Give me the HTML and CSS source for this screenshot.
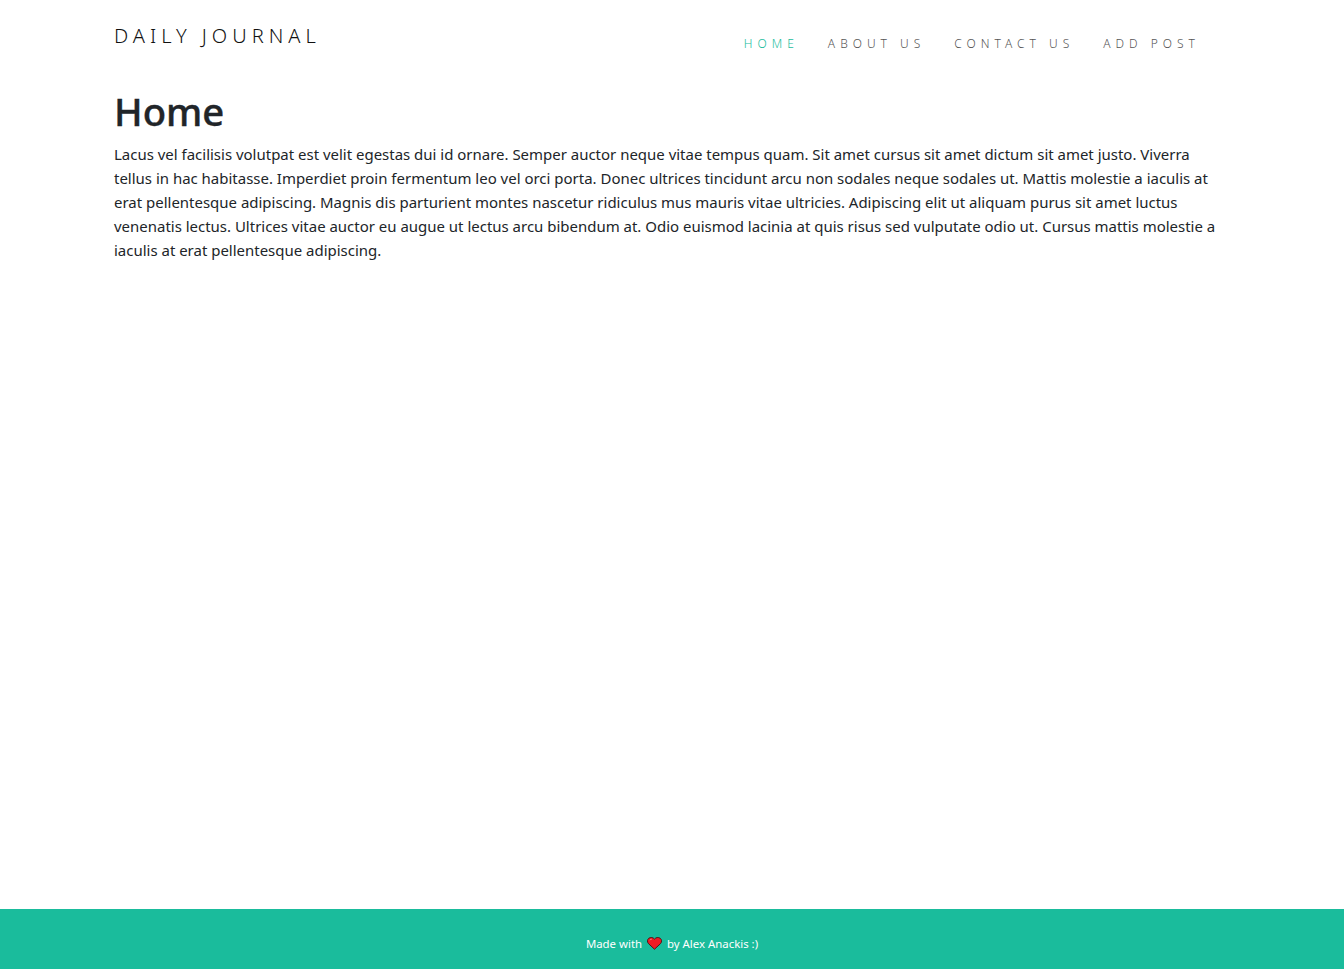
FILE: index.html
```html
<!DOCTYPE html>
<html lang="en">
<head>
  <meta charset="UTF-8" />
  <title>Daily Journal</title>
  <link rel="stylesheet" href="styles.css">
</head>
<body>
  <header class="navbar">
    <a class="brand" href="#">DAILY JOURNAL</a>
    <ul class="nav-links">
      <li><a class="active" href="#">HOME</a></li>
      <li><a href="#">ABOUT US</a></li>
      <li><a href="#">CONTACT US</a></li>
      <li><a href="#">ADD POST</a></li>
    </ul>
  </header>

  <main class="content">
    <h1>Home</h1>
    <p>Lacus vel facilisis volutpat est velit egestas dui id ornare. Semper auctor neque vitae tempus quam. Sit amet cursus sit amet dictum sit amet justo. Viverra tellus in hac habitasse. Imperdiet proin fermentum leo vel orci porta. Donec ultrices tincidunt arcu non sodales neque sodales ut. Mattis molestie a iaculis at erat pellentesque adipiscing. Magnis dis parturient montes nascetur ridiculus mus mauris vitae ultricies. Adipiscing elit ut aliquam purus sit amet luctus venenatis lectus. Ultrices vitae auctor eu augue ut lectus arcu bibendum at. Odio euismod lacinia at quis risus sed vulputate odio ut. Cursus mattis molestie a iaculis at erat pellentesque adipiscing.</p>
  </main>

  <footer class="footer">
    <span>Made with</span>
    <svg class="heart" viewBox="0 0 16 14" width="15" height="13" aria-hidden="true">
      <path d="M8 13.2 1.6 7.2C-.2 5.4.1 2.7 1.9 1.3 3.8 0 6.500.3 8 2.300 9.500.3 12.200 0 14.100 1.300c1.800 1.400 2.100 4.100.3 5.900z" fill="#ed1c24" stroke="#4a1015" stroke-width="1"/>
      <path d="M3 3.500c.5-.8 1.200-1.100 2-1.100" fill="none" stroke="#ff8a8a" stroke-width="1"/>
    </svg>
    <span>by Alex Anackis :)</span>
  </footer>
</body>
</html>
```

FILE: styles.css
```css
html,
body {
  height: 100%;
}

body {
  margin: 0;
  display: flex;
  flex-direction: column;
  font-family: "Noto Sans", "Open Sans", sans-serif;
  font-size: 14.97px;
  line-height: 24px;
  color: #212529;
  background-color: #fff;
}

a {
  text-decoration: none;
}

.navbar {
  width: 1116px;
  margin: 0 auto;
  display: flex;
  justify-content: space-between;
  align-items: flex-start;
}

.brand {
  margin-top: 22px;
  font-size: 20px;
  font-weight: 300;
  line-height: 28px;
  letter-spacing: 5px;
  color: #111;
}

.nav-links {
  list-style: none;
  margin: 30px 30px 0 0;
  padding: 0;
  display: flex;
  gap: 29px;
}

.nav-links a {
  font-size: 12px;
  font-weight: 300;
  line-height: 20px;
  letter-spacing: 5px;
  color: #555;
}

.nav-links a.active {
  color: #1abc9c;
}

.content {
  flex: 1;
  width: 1116px;
  margin: 0 auto;
}

h1 {
  margin: 34px 0 8px;
  font-size: 38.3px;
  font-weight: 500;
  line-height: 46px;
  -webkit-text-stroke: 0.4px #212529;
}

p {
  margin: 0;
}

.footer {
  height: 60px;
  padding-top: 9px;
  box-sizing: border-box;
  display: flex;
  justify-content: center;
  align-items: center;
  gap: 5px;
  font-size: 11.4px;
  color: #fff;
  background-color: #1abc9c;
}

.heart {
  display: block;
}
```
